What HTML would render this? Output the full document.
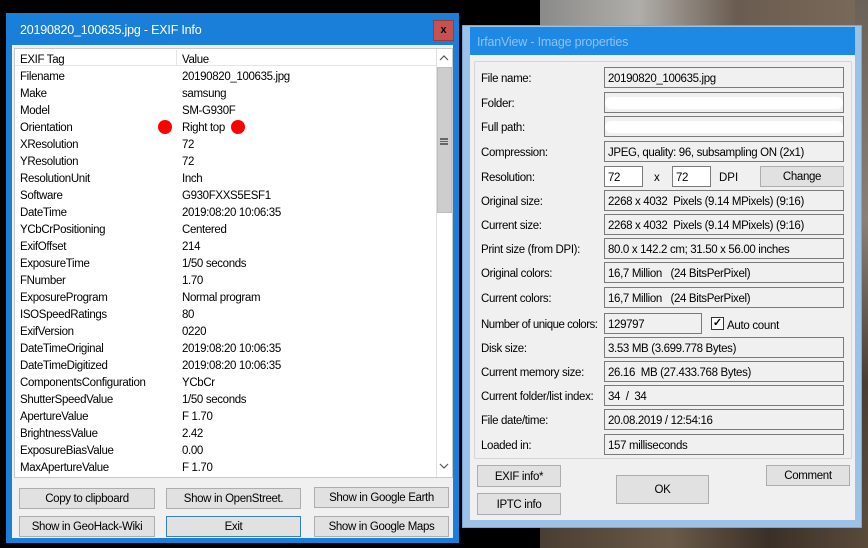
<!DOCTYPE html>
<html><head><meta charset="utf-8"><style>
*{margin:0;padding:0;box-sizing:border-box}
body{width:868px;height:548px;overflow:hidden;background:#000;position:relative;font-family:"Liberation Sans",sans-serif;font-size:11.5px;color:#000}
.a{position:absolute}
.row{position:absolute;left:20px;height:17px;line-height:17px;white-space:nowrap;letter-spacing:-0.35px;margin-top:2px}
.v{position:absolute;left:182px;height:17px;line-height:17px;white-space:nowrap;letter-spacing:-0.35px;margin-top:2px}
.btn{position:absolute;background:#e1e1e1;border:1px solid #adadad;text-align:center;font-size:11.5px;letter-spacing:-0.35px;padding-top:2px}
.lbl{position:absolute;left:481px;height:20px;line-height:21px;white-space:nowrap;letter-spacing:-0.35px;margin-top:2px}
.fld{position:absolute;left:604px;width:240px;height:21px;border:1px solid #7a7a7a;background:#f0f0f0;line-height:15px;padding:4px 0 0 3px;white-space:pre;letter-spacing:-0.35px}
</style></head><body>
<div class="a" style="left:540px;top:0;width:328px;height:26px;background:linear-gradient(90deg,#8a8a88,#b0aeaa 30%,#6a5c50 60%,#7a6a5a)"></div>
<div class="a" style="left:855px;top:0;width:13px;height:548px;background:linear-gradient(180deg,#6a6258,#8a8078 40%,#4a3e34 70%,#5c4e40)"></div>
<div class="a" style="left:540px;top:520px;width:328px;height:28px;background:linear-gradient(90deg,#4a3e32,#6a5a48 40%,#3a3028 70%,#5a4a3a)"></div>

<div class="a" style="left:6px;top:13px;width:453px;height:530px;background:#1a7fd8"></div>
<div class="a" style="left:20px;top:21px;color:#fff;font-size:12.5px;line-height:18px;letter-spacing:-0.2px">20190820_100635.jpg - EXIF Info</div>
<div class="a" style="left:433px;top:20px;width:21px;height:21px;background:#c75050;border:1px solid #9a3a3a;color:#000;font-size:11px;text-align:center;line-height:18px;font-weight:bold">x</div>
<div class="a" style="left:12px;top:45px;width:441px;height:493px;background:#f0f0f0"></div>
<div class="a" style="left:14px;top:48px;width:439px;height:430px;background:#fff;border:1px solid #c8c8c8"></div>
<div class="a" style="left:15px;top:49px;width:421px;height:17px;border-bottom:1px solid #e5e5e5"></div>
<div class="a" style="left:176px;top:50px;width:1px;height:15px;background:#e5e5e5"></div>
<div class="row" style="top:50px">EXIF Tag</div><div class="v" style="top:50px">Value</div>
<div class="a" style="left:436px;top:49px;width:16px;height:428px;background:#fff;border-left:1px solid #e0e0e0"></div>
<div class="a" style="left:437px;top:67px;width:15px;height:146px;background:#cdcdcd;border:1px solid #bdbdbd"></div>
<div class="a" style="left:440px;top:138px;width:8px;height:7px;border-top:2px solid #666;border-bottom:2px solid #666"></div>
<div class="a" style="left:440px;top:141px;width:8px;height:1px;background:#666"></div>
<svg class="a" style="left:439px;top:54px" width="10" height="8"><path d="M1 6 L5 2 L9 6" fill="none" stroke="#555" stroke-width="1.2"/></svg>
<svg class="a" style="left:439px;top:462px" width="10" height="8"><path d="M1 2 L5 6 L9 2" fill="none" stroke="#555" stroke-width="1.2"/></svg>

<div class="row" style="top:67px">Filename</div><div class="v" style="top:67px">20190820_100635.jpg</div>
<div class="row" style="top:84px">Make</div><div class="v" style="top:84px">samsung</div>
<div class="row" style="top:101px">Model</div><div class="v" style="top:101px">SM-G930F</div>
<div class="row" style="top:118px">Orientation</div><div class="v" style="top:118px">Right top</div>
<div class="a" style="left:158px;top:120px;width:14px;height:14px;border-radius:50%;background:#f00"></div>
<div class="a" style="left:231px;top:120px;width:14px;height:14px;border-radius:50%;background:#f00"></div>
<div class="row" style="top:135px">XResolution</div><div class="v" style="top:135px">72</div>
<div class="row" style="top:152px">YResolution</div><div class="v" style="top:152px">72</div>
<div class="row" style="top:169px">ResolutionUnit</div><div class="v" style="top:169px">Inch</div>
<div class="row" style="top:186px">Software</div><div class="v" style="top:186px">G930FXXS5ESF1</div>
<div class="row" style="top:203px">DateTime</div><div class="v" style="top:203px">2019:08:20 10:06:35</div>
<div class="row" style="top:220px">YCbCrPositioning</div><div class="v" style="top:220px">Centered</div>
<div class="row" style="top:237px">ExifOffset</div><div class="v" style="top:237px">214</div>
<div class="row" style="top:254px">ExposureTime</div><div class="v" style="top:254px">1/50 seconds</div>
<div class="row" style="top:271px">FNumber</div><div class="v" style="top:271px">1.70</div>
<div class="row" style="top:288px">ExposureProgram</div><div class="v" style="top:288px">Normal program</div>
<div class="row" style="top:305px">ISOSpeedRatings</div><div class="v" style="top:305px">80</div>
<div class="row" style="top:322px">ExifVersion</div><div class="v" style="top:322px">0220</div>
<div class="row" style="top:339px">DateTimeOriginal</div><div class="v" style="top:339px">2019:08:20 10:06:35</div>
<div class="row" style="top:356px">DateTimeDigitized</div><div class="v" style="top:356px">2019:08:20 10:06:35</div>
<div class="row" style="top:373px">ComponentsConfiguration</div><div class="v" style="top:373px">YCbCr</div>
<div class="row" style="top:390px">ShutterSpeedValue</div><div class="v" style="top:390px">1/50 seconds</div>
<div class="row" style="top:407px">ApertureValue</div><div class="v" style="top:407px">F 1.70</div>
<div class="row" style="top:424px">BrightnessValue</div><div class="v" style="top:424px">2.42</div>
<div class="row" style="top:441px">ExposureBiasValue</div><div class="v" style="top:441px">0.00</div>
<div class="row" style="top:458px">MaxApertureValue</div><div class="v" style="top:458px">F 1.70</div>

<div class="btn" style="left:19px;top:488px;width:136px;height:21px;line-height:17px">Copy to clipboard</div>
<div class="btn" style="left:166px;top:488px;width:135px;height:21px;line-height:17px">Show in OpenStreet.</div>
<div class="btn" style="left:314px;top:487px;width:135px;height:21px;line-height:17px">Show in Google Earth</div>
<div class="btn" style="left:19px;top:516px;width:136px;height:21px;line-height:17px">Show in GeoHack-Wiki</div>
<div class="btn" style="left:166px;top:516px;width:135px;height:21px;line-height:17px;border-color:#3c7fb1">Exit</div>
<div class="btn" style="left:314px;top:516px;width:135px;height:21px;line-height:17px">Show in Google Maps</div>

<div class="a" style="left:462px;top:25px;width:400px;height:503px;background:#9cc2e8;border:1px solid #7aa6d4"></div>
<div class="a" style="left:470px;top:27px;width:385px;height:28px;background:#1e88e5"></div>
<div class="a" style="left:477px;top:34px;color:#8ec0ee;font-size:12.5px;line-height:16px;letter-spacing:-0.2px">IrfanView - Image properties</div>
<div class="a" style="left:470px;top:55px;width:385px;height:465px;background:#f0f0f0"></div>
<div class="a" style="left:474px;top:61px;width:378px;height:398px;border:1px solid #d5d5d5;border-radius:2px"></div>

<div class="lbl" style="top:67px">File name:</div><div class="fld" style="top:67px">20190820_100635.jpg</div>
<div class="lbl" style="top:92px">Folder:</div><div class="fld" style="top:92px"><div style="position:absolute;left:0;right:0;top:4px;height:12px;background:#fff;border-radius:6px"></div></div>
<div class="lbl" style="top:116px">Full path:</div><div class="fld" style="top:116px"><div style="position:absolute;left:0;right:0;top:4px;height:12px;background:#fff;border-radius:6px"></div></div>
<div class="lbl" style="top:141px">Compression:</div><div class="fld" style="top:141px">JPEG, quality: 96, subsampling ON (2x1)</div>
<div class="lbl" style="top:166px">Resolution:</div>
<div class="fld" style="top:166px;width:39px;background:#fff">72</div>
<div class="a" style="left:654px;top:172px">x</div>
<div class="fld" style="top:166px;left:672px;width:39px;background:#fff">72</div>
<div class="a" style="left:719px;top:172px">DPI</div>
<div class="btn" style="left:760px;top:166px;width:84px;height:21px;line-height:17px">Change</div>
<div class="lbl" style="top:190px">Original size:</div><div class="fld" style="top:190px">2268 x 4032  Pixels (9.14 MPixels) (9:16)</div>
<div class="lbl" style="top:214px">Current size:</div><div class="fld" style="top:214px">2268 x 4032  Pixels (9.14 MPixels) (9:16)</div>
<div class="lbl" style="top:238px">Print size (from DPI):</div><div class="fld" style="top:238px">80.0 x 142.2 cm; 31.50 x 56.00 inches</div>
<div class="lbl" style="top:262px">Original colors:</div><div class="fld" style="top:262px">16,7 Million   (24 BitsPerPixel)</div>
<div class="lbl" style="top:287px">Current colors:</div><div class="fld" style="top:287px">16,7 Million   (24 BitsPerPixel)</div>
<div class="lbl" style="top:313px;letter-spacing:-0.5px">Number of unique colors:</div><div class="fld" style="top:313px;width:98px">129797</div>
<div class="a" style="left:711px;top:317px;width:13px;height:13px;border:1px solid #333;background:#fff;font-size:11px;line-height:11px;text-align:center;font-weight:bold">✓</div>
<div class="a" style="left:727px;top:318px;line-height:16px;letter-spacing:-0.3px">Auto count</div>
<div class="lbl" style="top:337px">Disk size:</div><div class="fld" style="top:337px">3.53 MB (3.699.778 Bytes)</div>
<div class="lbl" style="top:361px">Current memory size:</div><div class="fld" style="top:361px">26.16  MB (27.433.768 Bytes)</div>
<div class="lbl" style="top:385px">Current folder/list index:</div><div class="fld" style="top:385px">34  /  34</div>
<div class="lbl" style="top:409px">File date/time:</div><div class="fld" style="top:409px">20.08.2019 / 12:54:16</div>
<div class="lbl" style="top:434px">Loaded in:</div><div class="fld" style="top:434px">157 milliseconds</div>

<div class="btn" style="left:477px;top:465px;width:84px;height:22px;line-height:18px">EXIF info*</div>
<div class="btn" style="left:477px;top:493px;width:84px;height:22px;line-height:18px">IPTC info</div>
<div class="btn" style="left:616px;top:475px;width:93px;height:29px;line-height:25px">OK</div>
<div class="btn" style="left:766px;top:465px;width:84px;height:21px;line-height:17px">Comment</div>
</body></html>
